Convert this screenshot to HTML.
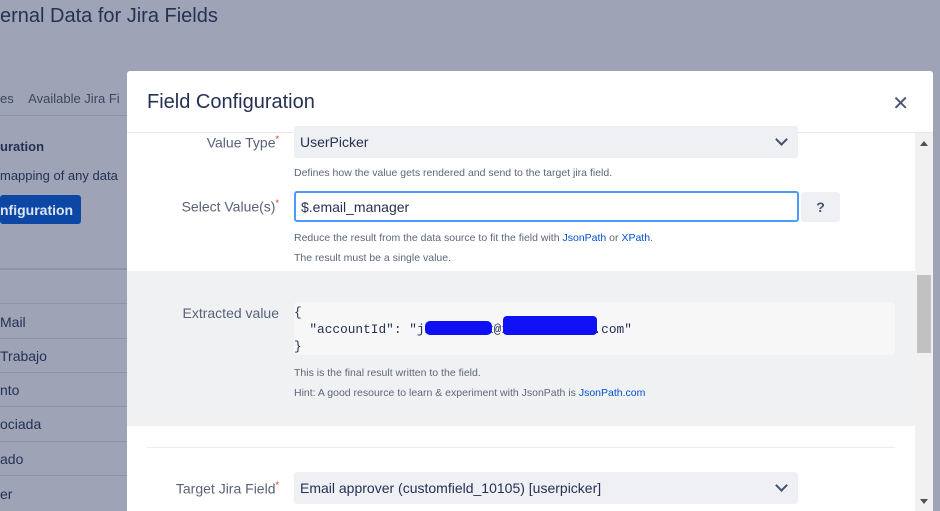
<!DOCTYPE html>
<html><head><meta charset="utf-8"><style>
*{box-sizing:border-box;margin:0;padding:0}
body{width:940px;height:511px;overflow:hidden;background:#9ea4b6;font-family:"Liberation Sans",sans-serif;position:relative;color:#2a3550}
.bg{position:absolute;color:#253154}
.modal{position:absolute;left:127px;top:71px;width:806px;height:440px;background:#fff;border-radius:3px 3px 0 0;overflow:hidden}
.hdr{height:62px;border-bottom:1px solid #e6e8ec;padding:20px 0 0 20px;font-size:20px;color:#253154}
.x{position:absolute;right:24px;top:20px;font-size:20px;color:#4a5570}
.lab{position:absolute;font-size:14px;color:#5a6278;text-align:right;width:152px;left:0}
.lab sup{color:#de350b;font-size:9px}
.sel{position:absolute;left:167px;width:504px;height:32px;background:#eef0f3;border-radius:3px;font-size:14px;padding:8px 6px;color:#253154}
.sel:after{content:"";position:absolute;right:12px;top:9px;width:7px;height:7px;border-right:2px solid #42526e;border-bottom:2px solid #42526e;transform:rotate(45deg)}
.help{position:absolute;left:167px;font-size:10.5px;color:#5e6678}
.help a{color:#0052cc;text-decoration:none}
.sb{position:absolute;right:0;top:62px;width:18px;height:378px;background:#f1f1f1}
</style></head><body>
<div class="bg" style="left:0;top:5px;font-size:20px">ernal Data for Jira Fields</div>
<div class="bg" style="left:0;top:91px;font-size:13px;color:#3d4660">es&nbsp;&nbsp;&nbsp;&nbsp;Available Jira Fi</div>
<div style="position:absolute;left:0;top:115px;width:127px;height:1px;background:#8d94a6"></div>
<div class="bg" style="left:0;top:139px;font-size:13px;font-weight:bold">uration</div>
<div class="bg" style="left:0;top:168px;font-size:13px">mapping of any data</div>
<div style="position:absolute;left:0;top:195px;width:81px;height:29px;background:#0c47a6;border-radius:3px;color:#dde4f2;font-size:14px;font-weight:bold;padding:7px 0 0 0">nfiguration</div>
<div style="position:absolute;left:0;top:268px;width:127px;height:2px;background:#8d94a6"></div>
<div style="position:absolute;left:0;top:303px;width:127px;height:1px;background:#8d94a6"></div>
<div class="bg" style="left:0;top:314px;font-size:14px">Mail</div>
<div style="position:absolute;left:0;top:338px;width:127px;height:1px;background:#8d94a6"></div>
<div class="bg" style="left:0;top:348px;font-size:14px">Trabajo</div>
<div style="position:absolute;left:0;top:372px;width:127px;height:1px;background:#8d94a6"></div>
<div class="bg" style="left:0;top:382px;font-size:14px">nto</div>
<div style="position:absolute;left:0;top:406px;width:127px;height:1px;background:#8d94a6"></div>
<div class="bg" style="left:0;top:416px;font-size:14px">ociada</div>
<div style="position:absolute;left:0;top:441px;width:127px;height:1px;background:#8d94a6"></div>
<div class="bg" style="left:0;top:451px;font-size:14px">ado</div>
<div style="position:absolute;left:0;top:475px;width:127px;height:1px;background:#8d94a6"></div>
<div class="bg" style="left:0;top:486px;font-size:14px">er</div>

<div class="modal">
<div class="hdr">Field Configuration</div>
<div class="x">✕</div>
<div class="lab" style="top:63px">Value Type<sup>*</sup></div>
<div class="sel" style="top:55px">UserPicker</div>
<div class="help" style="top:96px">Defines how the value gets rendered and send to the target jira field.</div>
<div class="lab" style="top:127px">Select Value(s)<sup>*</sup></div>
<div style="position:absolute;left:167px;top:120px;width:505px;height:31px;border:2px solid #4c9aff;border-radius:3px;font-size:14px;padding:6px 5px;color:#253154">$.email_manager</div>
<div style="position:absolute;left:674px;top:121px;width:39px;height:30px;background:#eef0f3;border-radius:3px;font-size:14px;font-weight:bold;text-align:center;padding-top:7px;color:#42526e">?</div>
<div class="help" style="top:161px">Reduce the result from the data source to fit the field with <a>JsonPath</a> or <a>XPath</a>.</div>
<div class="help" style="top:181px">The result must be a single value.</div>
<div style="position:absolute;left:0;top:200px;width:788px;height:155px;background:#f0f1f3"></div>
<div class="lab" style="top:234px">Extracted value</div>
<div style="position:absolute;left:167px;top:231px;width:601px;height:53px;background:#f7f7f8;border-radius:3px;font-family:'Liberation Mono',monospace;font-size:12.8px;line-height:17px;padding:2px 0 0 0;color:#253154;white-space:pre">{
  "accountId": "jixxxxxxxx@xxxxxxxxxxxx.com"
}</div>
<div style="position:absolute;left:298px;top:250px;width:67px;height:14px;background:#1010f5;border-radius:5px"></div>
<div style="position:absolute;left:376px;top:245px;width:94px;height:19px;background:#1010f5;border-radius:4px"></div>
<div class="help" style="top:296px">This is the final result written to the field.</div>
<div class="help" style="top:316px">Hint: A good resource to learn &amp; experiment with JsonPath is <a>JsonPath.com</a></div>
<div style="position:absolute;left:20px;top:376px;width:748px;height:1px;background:#f2e8e8"></div>
<div class="lab" style="top:409px">Target Jira Field<sup>*</sup></div>
<div class="sel" style="top:401px">Email approver (customfield_10105) [userpicker]</div>
<div class="sb">
<div style="position:absolute;left:5px;top:8px;border:4px solid transparent;border-bottom:5px solid #505050;border-top:0"></div>
<div style="position:absolute;left:2px;top:142px;width:14px;height:78px;background:#c1c1c1"></div>
<div style="position:absolute;left:5px;top:366px;border:4px solid transparent;border-top:5px solid #505050;border-bottom:0"></div>
</div>
</div>
</body></html>
